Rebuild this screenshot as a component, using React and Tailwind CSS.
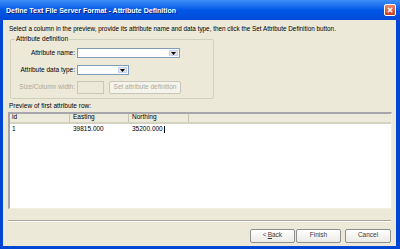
import React from "react";

const font = { fontFamily: '"Liberation Sans", Arial, sans-serif' };

function Combo({ w }) {
  return (
    <div className={`flex h-[10px] ${w} items-stretch border border-[#7f9db9] bg-white`}>
      <div className="flex-1" />
      <div className="m-[1px] flex w-[9px] items-center justify-center border border-[#c3d3fd] bg-[#e6e4dc]">
        <svg width="5" height="3" viewBox="0 0 5 3">
          <path d="M0 0h5L2.5 3z" fill="#000" />
        </svg>
      </div>
    </div>
  );
}

const btn =
  "flex h-[14px] items-center justify-center rounded-[2px] border border-[#8e8f8f] bg-gradient-to-b from-[#ffffff] to-[#ecebe6] text-[#3a3a3a]";

export default function App() {
  return (
    <div
      className="flex h-[249px] w-[400px] flex-col overflow-hidden bg-[#0046d5] text-[6.5px] leading-none text-black"
      style={font}
    >
      {/* Title bar */}
      <div className="flex h-[20px] shrink-0 items-center justify-between bg-gradient-to-b from-[#3d8dfa] via-[#0058e6] to-[#0049d8] pl-[6px] pr-[4px]">
        <span className="text-[7px] font-bold text-white [text-shadow:1px_1px_0_#0a1f7a]">
          Define Text File Server Format - Attribute Definition
        </span>
        <div className="flex h-[12px] w-[12px] items-center justify-center rounded-[2px] border border-white bg-gradient-to-b from-[#e8866a] to-[#c6391a]">
          <svg width="6" height="6" viewBox="0 0 6 6">
            <path d="M0.8 0.8L5.2 5.2M5.2 0.8L0.8 5.2" stroke="#fff" strokeWidth="1.4" />
          </svg>
        </div>
      </div>

      {/* Body */}
      <div className="ml-[3px] mr-[4px] mb-[3px] flex flex-1 flex-col bg-[#ece9d8] px-[5px]">
        <div className="mt-[6px] h-[8px] pl-[1px] text-[6.35px]">
          Select a column in the preview, provide its attribute name and data type, then click the Set Attribute Definition button.
        </div>

        {/* Group box */}
        <div className="relative ml-[2px] mt-[5px] h-[60px] w-[204px] rounded-[2px] border border-[#d0d0bf]">
          <span className="absolute -top-[4px] left-[4px] bg-[#ece9d8] px-[1px]">Attribute definition</span>
          <div className="mt-[8px] flex items-center">
            <span className="w-[66px] pr-[2px] text-right">Attribute name:</span>
            <Combo w="w-[103px]" />
          </div>
          <div className="mt-[7px] flex items-center">
            <span className="w-[66px] pr-[2px] text-right">Attribute data type:</span>
            <Combo w="w-[52px]" />
          </div>
          <div className="mt-[6px] flex items-center">
            <span className="w-[66px] pr-[2px] text-right text-[#aca899]">Size/Column width:</span>
            <div className="h-[13px] w-[27px] border border-[#c9c7ba] bg-[#ece9d8]" />
            <div className="ml-[5px] flex h-[13px] w-[72px] items-center justify-center rounded-[2px] border border-[#c9c7ba] bg-[#f5f4ea] text-[#aca899]">
              Set attribute definition
            </div>
          </div>
        </div>

        <div className="mt-[4px] pl-[1px]">Preview of first attribute row:</div>

        {/* List view */}
        <div className="mt-[2px] mr-[-1px] flex h-[97px] flex-col border-l-2 border-t-2 border-[#a7a6aa] border-r border-r-[#f1efe2] border-b border-b-[#f1efe2] bg-white">
          <div className="flex h-[10px] shrink-0 border-b-2 border-[#d6d2c2] bg-[#ebeadb]">
            <div className="flex w-[60px] items-center border-r border-[#c7c5b2] pl-[2px]">id</div>
            <div className="flex w-[59px] items-center border-r border-[#c7c5b2] pl-[3px]">Easting</div>
            <div className="flex w-[60px] items-center border-r border-[#c7c5b2] pl-[3px]">Northing</div>
            <div className="flex-1" />
          </div>
          <div className="flex h-[11px] items-center">
            <div className="w-[60px] pl-[2px]">1</div>
            <div className="w-[59px] pl-[3px]">39815.000</div>
            <div className="flex w-[60px] items-center pl-[3px]">
              35200.000<span className="ml-[1px] inline-block h-[7px] w-[1px] bg-black" />
            </div>
          </div>
        </div>

        {/* Separator */}
        <div className="mt-[11px] h-[2px] border-t border-[#aca899] border-b border-b-white" />

        {/* Buttons */}
        <div className="mt-[7px] flex justify-end">
          <button className={`${btn} w-[45px]`}>
            &lt; <u className="ml-[1px]">B</u>ack
          </button>
          <button className={`${btn} ml-[1px] w-[45px]`}>Finish</button>
          <button className={`${btn} ml-[4px] w-[46px]`}>Cancel</button>
        </div>
      </div>
    </div>
  );
}
